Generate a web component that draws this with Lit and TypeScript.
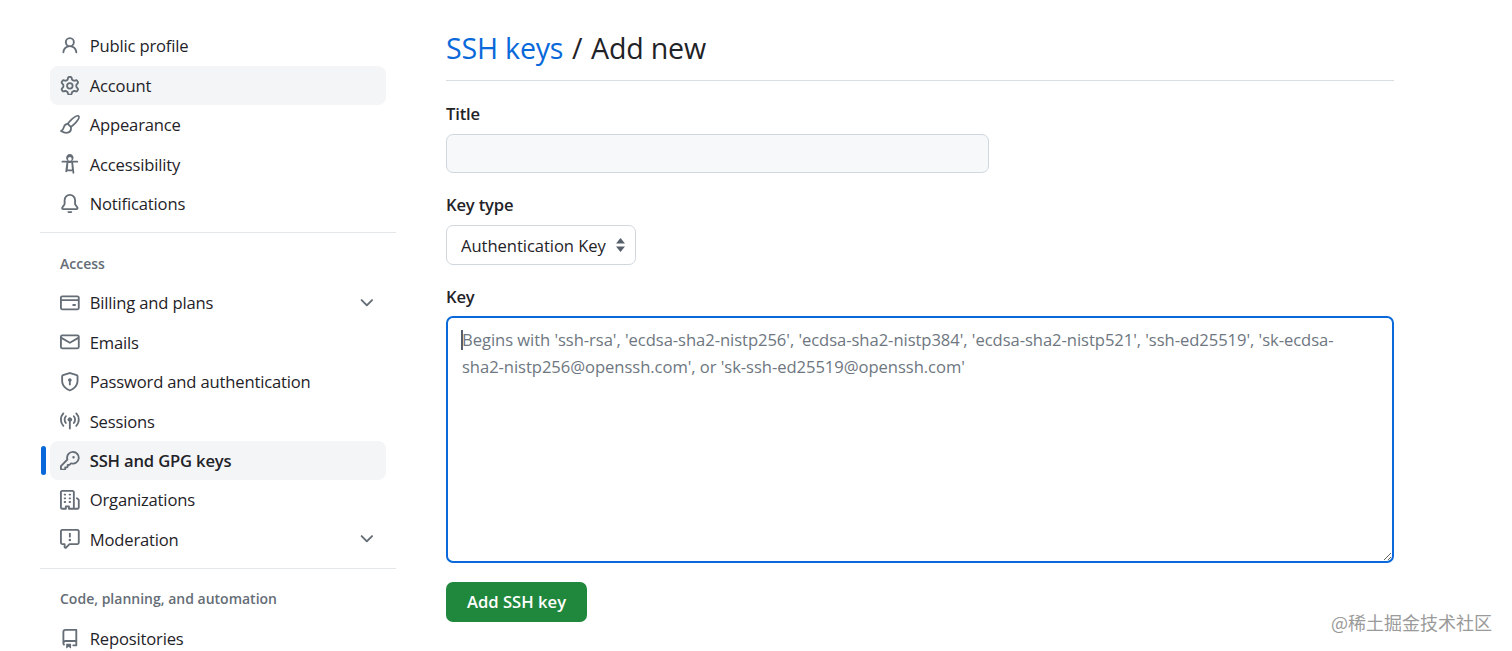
import { LitElement, html, css, svg } from "lit";
import { customElement } from "lit/decorators.js";

const ICONS: Record<string, string> = {
  person: "M10.561 8.073a6.005 6.005 0 0 1 3.432 5.142.75.75 0 1 1-1.498.07 4.5 4.5 0 0 0-8.99 0 .75.75 0 0 1-1.498-.07 6.004 6.004 0 0 1 3.431-5.142 3.999 3.999 0 1 1 5.123 0ZM10.5 5a2.5 2.5 0 1 0-5 0 2.5 2.5 0 0 0 5 0Z",
  gear: "M8 0a8.2 8.2 0 0 1 .701.031C9.444.095 9.99.645 10.16 1.29l.288 1.107c.018.066.079.158.212.224.231.114.454.243.668.386.123.082.233.09.299.071l1.103-.303c.644-.176 1.392.021 1.82.63.27.385.506.792.704 1.218.315.675.111 1.422-.364 1.891l-.814.806c-.049.048-.098.147-.088.294.016.257.016.515 0 .772-.01.147.038.246.088.294l.814.806c.475.469.679 1.216.364 1.891a7.977 7.977 0 0 1-.704 1.217c-.428.61-1.176.807-1.82.63l-1.102-.302c-.067-.019-.177-.011-.3.071a5.909 5.909 0 0 1-.668.386c-.133.066-.194.158-.211.224l-.29 1.106c-.168.646-.715 1.196-1.458 1.26a8.006 8.006 0 0 1-1.402 0c-.743-.064-1.289-.614-1.458-1.26l-.289-1.106c-.018-.066-.079-.158-.212-.224a5.738 5.738 0 0 1-.668-.386c-.123-.082-.233-.09-.299-.071l-1.103.303c-.644.176-1.392-.021-1.82-.63a8.12 8.12 0 0 1-.704-1.218c-.315-.675-.111-1.422.363-1.891l.815-.806c.05-.048.098-.147.088-.294a6.214 6.214 0 0 1 0-.772c.01-.147-.038-.246-.088-.294l-.815-.806C.635 6.045.431 5.298.746 4.623a7.92 7.92 0 0 1 .704-1.217c.428-.61 1.176-.807 1.82-.63l1.102.302c.067.019.177.011.3-.071.214-.143.437-.272.668-.386.133-.066.194-.158.211-.224l.29-1.106C6.009.645 6.556.095 7.299.03 7.53.01 7.764 0 8 0Zm-.571 1.525c-.036.003-.108.036-.137.146l-.289 1.105c-.147.561-.549.967-.998 1.189-.173.086-.34.183-.5.29-.417.278-.97.423-1.529.27l-1.103-.303c-.109-.03-.175.016-.195.045-.22.312-.412.644-.573.99-.014.031-.021.11.059.19l.815.806c.411.406.562.957.53 1.456a4.709 4.709 0 0 0 0 .582c.032.499-.119 1.05-.53 1.456l-.815.806c-.081.08-.073.159-.059.19.162.346.353.677.573.989.02.03.085.076.195.046l1.102-.303c.56-.153 1.113-.008 1.53.27.161.107.328.204.501.29.447.222.85.629.997 1.189l.289 1.105c.029.109.101.143.137.146a6.6 6.6 0 0 0 1.142 0c.036-.003.108-.036.137-.146l.289-1.105c.147-.561.549-.967.998-1.189.173-.086.34-.183.5-.29.417-.278.97-.423 1.529-.27l1.103.303c.109.029.175-.016.195-.045.22-.313.411-.644.573-.99.014-.031.021-.11-.059-.19l-.815-.806c-.411-.406-.562-.957-.53-1.456a4.709 4.709 0 0 0 0-.582c-.032-.499.119-1.05.53-1.456l.815-.806c.081-.08.073-.159.059-.19a6.464 6.464 0 0 0-.573-.989c-.02-.03-.085-.076-.195-.046l-1.102.303c-.56.153-1.113.008-1.53-.27a4.44 4.44 0 0 0-.501-.29c-.447-.222-.85-.629-.997-1.189l-.289-1.105c-.029-.11-.101-.143-.137-.146a6.6 6.6 0 0 0-1.142 0ZM11 8a3 3 0 1 1-6 0 3 3 0 0 1 6 0ZM9.5 8a1.5 1.5 0 1 0-3.001.001A1.5 1.5 0 0 0 9.5 8Z",
  access: "M9.923 5.302c.063.063.122.129.178.198H14A.75.75 0 0 1 14 7h-3.3l.578 5.163.362 2.997a.75.75 0 0 1-1.49.18L10.132 14H5.868l-.018.16a.75.75 0 0 1-1.49-.18l.362-2.997L5.3 7H2a.75.75 0 0 1 0-1.5h3.9a2.54 2.54 0 0 1 .176-.198 3 3 0 1 1 3.847 0ZM9.2 7.073h-.003a3.003 3.003 0 0 1-2.394 0L6.3 12.5h3.4ZM8 5.5a1.5 1.5 0 1 0-.001-3.001A1.5 1.5 0 0 0 8 5.5Z",
  bell: "M8 16c.9 0 1.7-.6 1.9-1.5.1-.3-.1-.5-.4-.5h-3c-.3 0-.5.2-.4.5.2.9 1 1.5 1.9 1.5ZM3 5a5 5 0 0 1 10 0v2.947c0 .05.015.098.042.139l1.703 2.555A1.519 1.519 0 0 1 13.482 13H2.518a1.516 1.516 0 0 1-1.263-2.36l1.703-2.554A.255.255 0 0 0 3 7.947Zm5-3.5A3.5 3.5 0 0 0 4.5 5v2.947c0 .346-.102.683-.294.97l-1.703 2.556a.017.017 0 0 0-.003.01l.001.006c0 .002.002.004.004.006l.006.004.007.001h10.964l.007-.001.006-.004.004-.006.001-.007a.017.017 0 0 0-.003-.01l-1.703-2.554a1.745 1.745 0 0 1-.294-.97V5A3.5 3.5 0 0 0 8 1.5Z",
  card: "M10.75 9a.75.75 0 0 0 0 1.5h1.5a.75.75 0 0 0 0-1.5h-1.5ZM0 3.75C0 2.784.784 2 1.75 2h12.5c.966 0 1.75.784 1.75 1.75v8.5A1.75 1.75 0 0 1 14.25 14H1.75A1.75 1.75 0 0 1 0 12.25ZM14.5 6.5h-13v5.75c0 .138.112.25.25.25h12.5a.25.25 0 0 0 .25-.25Zm0-2.75a.25.25 0 0 0-.25-.25H1.75a.25.25 0 0 0-.25.25V5h13Z",
  mail: "M1.75 2h12.5c.966 0 1.75.784 1.75 1.75v8.5A1.75 1.75 0 0 1 14.25 14H1.75A1.75 1.75 0 0 1 0 12.25v-8.5C0 2.784.784 2 1.75 2ZM1.5 12.251c0 .138.112.25.25.25h12.5a.25.25 0 0 0 .25-.25V5.809L8.38 9.397a.75.75 0 0 1-.76 0L1.5 5.809v6.442Zm13-8.181v-.32a.25.25 0 0 0-.25-.25H1.75a.25.25 0 0 0-.25.25v.32L8 7.88Z",
  shield: "m8.533.133 5.25 1.68A1.75 1.75 0 0 1 15 3.48V7c0 1.566-.32 3.182-1.303 4.682-.983 1.498-2.585 2.813-5.032 3.855a1.697 1.697 0 0 1-1.33 0c-2.447-1.042-4.049-2.357-5.032-3.855C1.32 10.182 1 8.566 1 7V3.48a1.75 1.75 0 0 1 1.217-1.667l5.25-1.68a1.748 1.748 0 0 1 1.066 0Zm-.61 1.429.001.001-5.25 1.68a.251.251 0 0 0-.174.237V7c0 1.36.275 2.666 1.057 3.859.784 1.194 2.121 2.342 4.366 3.298a.196.196 0 0 0 .154 0c2.245-.957 3.582-2.103 4.366-3.297C13.225 9.666 13.5 8.358 13.5 7V3.48a.25.25 0 0 0-.174-.238l-5.25-1.68a.25.25 0 0 0-.153 0ZM9.5 6.5c0 .536-.286 1.032-.75 1.3v2.45a.75.75 0 0 1-1.5 0V7.8A1.5 1.5 0 1 1 9.5 6.5Z",
  broadcast: "M8.75 8.582v5.668a.75.75 0 0 1-1.5 0V8.582a1.75 1.75 0 1 1 1.5 0Zm3.983-7.125a.75.75 0 0 1 1.06.026A7.976 7.976 0 0 1 16 7c0 2.139-.84 4.083-2.207 5.517a.75.75 0 1 1-1.086-1.034A6.474 6.474 0 0 0 14.5 7a6.474 6.474 0 0 0-1.793-4.483.75.75 0 0 1 .026-1.06Zm-9.466 0c.3.286.312.76.026 1.06A6.474 6.474 0 0 0 1.5 7a6.47 6.47 0 0 0 1.793 4.483.75.75 0 0 1-1.086 1.034A7.973 7.973 0 0 1 0 7c0-2.139.84-4.083 2.207-5.517a.75.75 0 0 1 1.06-.026Zm8.556 2.321A4.988 4.988 0 0 1 13 7a4.988 4.988 0 0 1-1.177 3.222.75.75 0 1 1-1.146-.967A3.487 3.487 0 0 0 11.5 7c0-.86-.309-1.645-.823-2.255a.75.75 0 0 1 1.146-.967Zm-6.492.958A3.48 3.48 0 0 0 4.5 7a3.48 3.48 0 0 0 .823 2.255.75.75 0 0 1-1.146.967A4.981 4.981 0 0 1 3 7a4.982 4.982 0 0 1 1.188-3.236.75.75 0 1 1 1.143.97Z",
  key: "M10.5 0a5.499 5.499 0 1 1-1.288 10.848l-.932.932a.749.749 0 0 1-.53.22H7v.75a.749.749 0 0 1-.22.53l-.5.5a.749.749 0 0 1-.53.22H5v.75a.749.749 0 0 1-.22.53l-.5.5a.749.749 0 0 1-.53.22h-2A1.75 1.75 0 0 1 0 14.25v-2c0-.199.079-.389.22-.53l4.932-4.932A5.5 5.5 0 0 1 10.5 0Zm-4 5.5c-.001.431.069.86.205 1.269a.75.75 0 0 1-.181.768L1.5 12.56v1.69c0 .138.112.25.25.25h1.69l.06-.06v-1.19a.75.75 0 0 1 .75-.75h1.19l.06-.06v-1.19a.75.75 0 0 1 .75-.75h1.19l1.023-1.025a.75.75 0 0 1 .768-.18A4 4 0 1 0 6.5 5.5ZM11 6a1 1 0 1 1 0-2 1 1 0 0 1 0 2Z",
  org: "M1.75 16A1.75 1.75 0 0 1 0 14.25V1.75C0 .784.784 0 1.75 0h8.5C11.216 0 12 .784 12 1.75v12.5c0 .085-.006.168-.018.25h2.268a.25.25 0 0 0 .25-.25V8.285a.25.25 0 0 0-.111-.208l-1.055-.703a.749.749 0 1 1 .832-1.248l1.055.703c.487.325.779.871.779 1.456v5.965A1.75 1.75 0 0 1 14.25 16h-3.5a.766.766 0 0 1-.197-.026c-.099.017-.2.026-.303.026h-3a.75.75 0 0 1-.75-.75V14h-1v1.25a.75.75 0 0 1-.75.75Zm-.25-1.75c0 .138.112.25.25.25H4v-1.25a.75.75 0 0 1 .75-.75h2.5a.75.75 0 0 1 .75.75v1.25h2.25a.25.25 0 0 0 .25-.25V1.75a.25.25 0 0 0-.25-.25h-8.5a.25.25 0 0 0-.25.25ZM3.75 6h.5a.75.75 0 0 1 0 1.5h-.5a.75.75 0 0 1 0-1.5ZM3 3.75A.75.75 0 0 1 3.75 3h.5a.75.75 0 0 1 0 1.5h-.5A.75.75 0 0 1 3 3.75Zm4 3A.75.75 0 0 1 7.75 6h.5a.75.75 0 0 1 0 1.5h-.5A.75.75 0 0 1 7 6.75ZM7.75 3h.5a.75.75 0 0 1 0 1.5h-.5a.75.75 0 0 1 0-1.5ZM3 9.75A.75.75 0 0 1 3.75 9h.5a.75.75 0 0 1 0 1.5h-.5A.75.75 0 0 1 3 9.75ZM7.75 9h.5a.75.75 0 0 1 0 1.5h-.5a.75.75 0 0 1 0-1.5Z",
  report: "M0 1.75C0 .784.784 0 1.75 0h12.5C15.216 0 16 .784 16 1.75v9.5A1.75 1.75 0 0 1 14.25 13H8.06l-2.573 2.573A1.458 1.458 0 0 1 3 14.543V13H1.75A1.75 1.75 0 0 1 0 11.25Zm1.75-.25a.25.25 0 0 0-.25.25v9.5c0 .138.112.25.25.25h2a.75.75 0 0 1 .75.75v2.19l2.72-2.72a.749.749 0 0 1 .53-.22h6.5a.25.25 0 0 0 .25-.25v-9.5a.25.25 0 0 0-.25-.25Zm7 2.25v2.5a.75.75 0 0 1-1.5 0v-2.5a.75.75 0 0 1 1.5 0ZM9 9a1 1 0 1 1-2 0 1 1 0 0 1 2 0Z",
  repo: "M2 2.5A2.5 2.5 0 0 1 4.5 0h8.75a.75.75 0 0 1 .75.75v12.5a.75.75 0 0 1-.75.75h-2.5a.75.75 0 0 1 0-1.5h1.75v-2h-8a1 1 0 0 0-.714 1.7.75.75 0 1 1-1.072 1.05A2.495 2.495 0 0 1 2 11.5Zm10.5-1h-8a1 1 0 0 0-1 1v6.708A2.486 2.486 0 0 1 4.5 9h8ZM5 12.25a.25.25 0 0 1 .25-.25h3.5a.25.25 0 0 1 .25.25v3.25a.25.25 0 0 1-.4.2l-1.45-1.087a.249.249 0 0 0-.3 0L5.4 15.7a.25.25 0 0 1-.4-.2Z",
  chevron: "M12.78 5.22a.749.749 0 0 1 0 1.06l-4.25 4.25a.749.749 0 0 1-1.06 0L3.22 6.28a.749.749 0 1 1 1.06-1.06L8 8.939l3.72-3.719a.749.749 0 0 1 1.06 0Z",
};

const STROKE: Record<string, unknown> = {
  brush: svg`<path d="M15.1.9c-.8-.8-2.9.4-5.4 2.5C8.2 4.8 7 6.2 6.3 7.2l2.5 2.5c1-.7 2.4-1.9 3.8-3.3C14.8 4 15.9 1.7 15.1.9Z"/><path d="M6.3 7.2C4.4 7.2 3.5 8.4 3.1 10c-.3 1.3-.8 2.6-2.3 3.1 2.3 1.3 4.6 1.8 6.2 1 1.5-.7 2.2-2.6 1.8-4.4"/>`,
};

function icon(name: string) {
  if (STROKE[name]) {
    return html`<svg class="icon line" viewBox="0 0 16 16">${STROKE[name]}</svg>`;
  }
  return html`<svg class="icon" viewBox="0 0 16 16"><path d=${ICONS[name]}></path></svg>`;
}

type Item = { label: string; icon: string; hover?: boolean; active?: boolean; chevron?: boolean };

const GROUP1: Item[] = [
  { label: "Public profile", icon: "person" },
  { label: "Account", icon: "gear", hover: true },
  { label: "Appearance", icon: "brush" },
  { label: "Accessibility", icon: "access" },
  { label: "Notifications", icon: "bell" },
];
const GROUP2: Item[] = [
  { label: "Billing and plans", icon: "card", chevron: true },
  { label: "Emails", icon: "mail" },
  { label: "Password and authentication", icon: "shield" },
  { label: "Sessions", icon: "broadcast" },
  { label: "SSH and GPG keys", icon: "key", active: true },
  { label: "Organizations", icon: "org" },
  { label: "Moderation", icon: "report", chevron: true },
];
const GROUP3: Item[] = [{ label: "Repositories", icon: "repo" }];

const PLACEHOLDER =
  "Begins with 'ssh-rsa', 'ecdsa-sha2-nistp256', 'ecdsa-sha2-nistp384', 'ecdsa-sha2-nistp521', 'ssh-ed25519', 'sk-ecdsa-sha2-nistp256@openssh.com', or 'sk-ssh-ed25519@openssh.com'";

@customElement("app-root")
export class AppRoot extends LitElement {
  static styles = css`
    :host {
      display: block;
      height: 651px;
      overflow: hidden;
      position: relative;
      background: #fff;
      color: #1f2328;
      font-family: "Open Sans", "Noto Sans", sans-serif;
      font-size: 16.6px;
      letter-spacing: -0.17px;
    }
    .page {
      display: flex;
      gap: 50px;
      padding: 26.3px 0 0 40px;
    }
    .side {
      width: 356px;
      flex: none;
    }
    .row {
      position: relative;
      display: flex;
      align-items: center;
      height: 39.4px;
      margin: 0 10px;
      padding: 0 10px;
      gap: 10px;
      border-radius: 8px;
      box-sizing: border-box;
      color: #1f2328;
    }
    .row.hover,
    .row.active {
      background: #f4f5f7;
    }
    .row.active {
      font-weight: 600;
    }
    .row.active::before {
      content: "";
      position: absolute;
      left: -9px;
      top: 5px;
      bottom: 5px;
      width: 5px;
      border-radius: 3px;
      background: #0969da;
    }
    .icon {
      width: 19.7px;
      height: 19.7px;
      flex: none;
      fill: #656d76;
    }
    .icon.line {
      fill: none;
      stroke: #656d76;
      stroke-width: 1.4;
      stroke-linecap: round;
      stroke-linejoin: round;
    }
    .label {
      flex: 1;
      white-space: nowrap;
    }
    .chev {
      display: flex;
      margin-right: -1px;
    }
    hr {
      border: 0;
      border-top: 1px solid #e4e7ea;
      margin: 9px 0 0;
    }
    .group-title {
      display: flex;
      align-items: center;
      height: 50px;
      padding: 10px 0 0 20px;
      box-sizing: border-box;
      font-size: 14px;
      font-weight: 600;
      color: #656d76;
      letter-spacing: 0;
    }
    main {
      width: 948px;
      flex: none;
    }
    h1 {
      margin: 0;
      height: 54.8px;
      box-sizing: border-box;
      border-bottom: 1px solid #d8dee4;
      font-size: 28.6px;
      font-weight: 400;
      line-height: 44px;
      letter-spacing: -0.2px;
    }
    h1 a {
      color: #0969da;
      text-decoration: none;
    }
    .slash {
      margin: 0 1.5px;
    }
    label {
      display: block;
      font-weight: 600;
      height: 24px;
      line-height: 24px;
    }
    .title-label {
      margin-top: 21px;
    }
    input {
      display: block;
      width: 543px;
      height: 39px;
      box-sizing: border-box;
      margin-top: 8px;
      background: #f6f8fa;
      border: 1px solid #d0d7de;
      border-radius: 7px;
      padding: 0 15px;
    }
    .keytype {
      margin-top: 20px;
    }
    .select {
      position: relative;
      width: 190px;
      margin-top: 8px;
    }
    select {
      display: block;
      appearance: none;
      width: 100%;
      height: 40px;
      box-sizing: border-box;
      background: #fff;
      border: 1px solid #d0d7de;
      border-radius: 7px;
      padding: 0 0 0 14px;
      font: inherit;
      letter-spacing: -0.06px;
      color: #1f2328;
    }
    .arrows {
      position: absolute;
      right: 11px;
      top: 13px;
      width: 9px;
      height: 14px;
      fill: #57606a;
    }
    .keylabel {
      margin-top: 20px;
    }
    .area {
      position: relative;
      margin-top: 7px;
    }
    textarea {
      display: block;
      width: 100%;
      height: 247px;
      box-sizing: border-box;
      border: 2px solid #0969da;
      border-radius: 7px;
      padding: 8px 24px 9px 14px;
      font: inherit;
      line-height: 27px;
      letter-spacing: -0.055px;
      outline: none;
      resize: vertical;
    }
    textarea::placeholder {
      color: #6e7781;
      opacity: 1;
    }
    .caret {
      position: absolute;
      left: 15px;
      top: 14px;
      width: 2px;
      height: 20px;
      background: #57606a;
    }
    button {
      display: block;
      margin-top: 19px;
      width: 141px;
      height: 40px;
      border: 0;
      border-radius: 7px;
      padding: 0 0 2px;
      background: #1f883d;
      color: #fff;
      font: inherit;
      font-weight: 600;
      letter-spacing: 0.03px;
    }
    .mark {
      position: absolute;
      right: 20px;
      top: 610px;
      font-family: "Noto Sans CJK SC", sans-serif;
      font-size: 18px;
      letter-spacing: 0;
      line-height: 24px;
      color: #9a9a9a;
    }
  `;

  private renderRow(it: Item) {
    const cls = "row" + (it.hover ? " hover" : "") + (it.active ? " active" : "");
    return html`<div class=${cls}>
      ${icon(it.icon)}
      <span class="label">${it.label}</span>
      ${it.chevron ? html`<span class="chev">${icon("chevron")}</span>` : null}
    </div>`;
  }

  render() {
    return html`
      <div class="page">
        <nav class="side">
          ${GROUP1.map((i) => this.renderRow(i))}
          <hr />
          <div class="group-title">Access</div>
          ${GROUP2.map((i) => this.renderRow(i))}
          <hr />
          <div class="group-title">Code, planning, and automation</div>
          ${GROUP3.map((i) => this.renderRow(i))}
        </nav>
        <main>
          <h1><a>SSH keys</a> <span class="slash">/</span> Add new</h1>
          <label class="title-label">Title</label>
          <input type="text" />
          <label class="keytype">Key type</label>
          <div class="select">
            <select><option>Authentication Key</option></select>
            <svg class="arrows" viewBox="0 0 9 14"><path d="M4.5 0 9 5.5H0ZM4.5 14 0 8.5h9Z"></path></svg>
          </div>
          <label class="keylabel">Key</label>
          <div class="area">
            <textarea placeholder=${PLACEHOLDER}></textarea>
            <span class="caret"></span>
          </div>
          <button>Add SSH key</button>
        </main>
      </div>
      <div class="mark">@稀土掘金技术社区</div>
    `;
  }
}
